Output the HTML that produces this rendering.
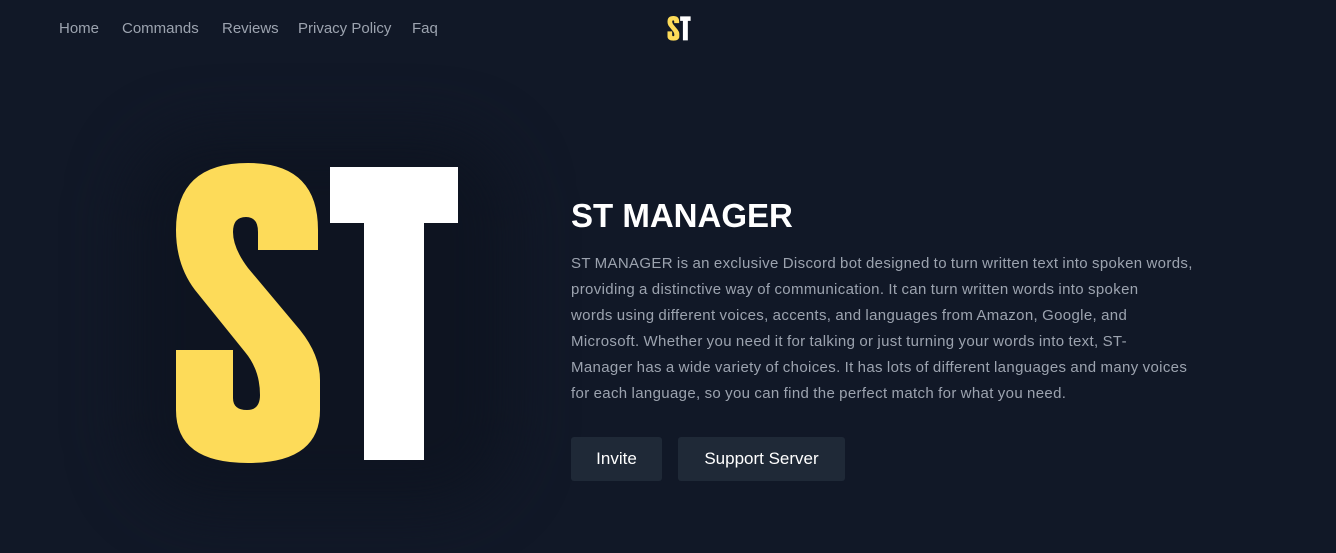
<!DOCTYPE html>
<html><head><meta charset="utf-8"><style>
*{margin:0;padding:0;box-sizing:border-box}
body{width:1336px;height:553px;background:#111827;font-family:"Liberation Sans",sans-serif;overflow:hidden;position:relative}
.nav a{position:absolute;top:20px;color:#9ca3af;font-size:15px;text-decoration:none;white-space:nowrap}
.glow{position:absolute;left:130px;top:135px;width:380px;height:370px;background:#0e1421;border-radius:80px;filter:blur(30px)}
h1{position:absolute;left:571px;top:197px;color:#fff;font-size:33px;font-weight:bold;white-space:nowrap}
.p{position:absolute;left:571px;top:251px;color:#9ca3af;font-size:15px;line-height:26px;white-space:nowrap;letter-spacing:0.35px;word-spacing:-0.5px}
.btn{position:absolute;top:437px;height:44px;background:#1f2937;border-radius:3px;color:#fff;font-size:17px;line-height:44px;text-align:center}
</style></head><body>
<div class="nav">
<a style="left:59px">Home</a><a style="left:122px">Commands</a><a style="left:222px">Reviews</a><a style="left:298px">Privacy Policy</a><a style="left:412px">Faq</a>
</div>
<svg style="position:absolute;left:0;top:0" width="1336" height="553">
<g transform="translate(667.5,16) scale(0.082) translate(-176,-163)">
<path fill="#fddb59" d="M258,250 V232 Q258,217 246,217 Q233,217 233,232 Q233,248 248,268 L300,330 Q320,355 320,380 L320,410 Q320,463 248,463 Q176,463 176,410 L176,350 L233,350 V398 Q233,410 247,410 Q260,410 260,395 Q260,370 245,352 L195,290 Q176,265 176,230 Q176,163 248,163 Q318,163 318,230 L318,250 Z"/>
<path fill="#fff" d="M330,167 H458 V223 H424 V460 H364 V223 H330 Z"/>
</g>
</svg>
<div class="glow"></div>
<svg style="position:absolute;left:0;top:0" width="1336" height="553">
<path fill="#fddb59" d="M258,250 V232 Q258,217 246,217 Q233,217 233,232 Q233,248 248,268 L300,330 Q320,355 320,380 L320,410 Q320,463 248,463 Q176,463 176,410 L176,350 L233,350 V398 Q233,410 247,410 Q260,410 260,395 Q260,370 245,352 L195,290 Q176,265 176,230 Q176,163 248,163 Q318,163 318,230 L318,250 Z"/>
<path fill="#fff" d="M330,167 H458 V223 H424 V460 H364 V223 H330 Z"/>
</svg>
<h1>ST MANAGER</h1>
<div class="p">ST MANAGER is an exclusive Discord bot designed to turn written text into spoken words,<br>providing a distinctive way of communication. It can turn written words into spoken<br>words using different voices, accents, and languages from Amazon, Google, and<br>Microsoft. Whether you need it for talking or just turning your words into text, ST-<br>Manager has a wide variety of choices. It has lots of different languages and many voices<br>for each language, so you can find the perfect match for what you need.</div>
<div class="btn" style="left:571px;width:91px">Invite</div>
<div class="btn" style="left:678px;width:167px">Support Server</div>
</body></html>
